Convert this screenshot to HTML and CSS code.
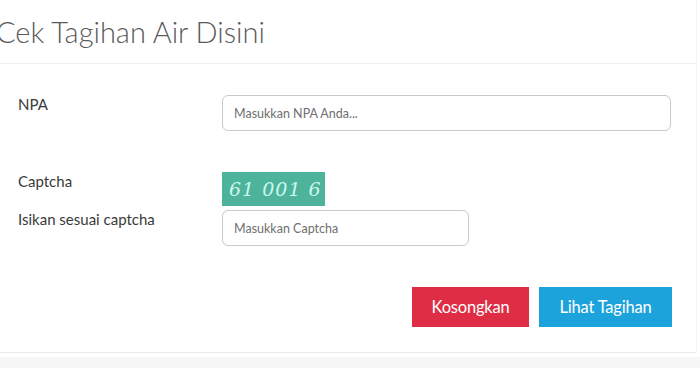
FILE: index.html
```html
<!DOCTYPE html>
<html lang="id">

<head>
    <meta charset="UTF-8">
    <meta name="viewport" content="width=device-width, initial-scale=1.0">
    <title>Cek Tagihan Air</title>
    <link rel="stylesheet" href="styles.css">
</head>

<body>
    <div class="card">
        <div class="card-header">
            <h2 class="card-title">Cek Tagihan Air Disini</h2>
        </div>

        <form class="bill-form">
            <!-- NPA -->
            <div class="form-row row-npa">
                <label class="form-label" for="npa">NPA</label>
                <input class="form-input input-wide" id="npa" type="text" placeholder="Masukkan NPA Anda...">
            </div>

            <!-- Captcha -->
            <div class="form-row row-captcha">
                <span class="form-label">Captcha</span>
                <div class="captcha-box">61 001 6</div>
            </div>
            <div class="form-row row-captcha-input">
                <label class="form-label" for="captcha">Isikan sesuai captcha</label>
                <input class="form-input input-short" id="captcha" type="text" placeholder="Masukkan Captcha">
            </div>

            <div class="form-actions">
                <button type="reset" class="btn btn-red">Kosongkan</button>
                <button type="submit" class="btn btn-blue">Lihat Tagihan</button>
            </div>
        </form>
    </div>
    <div class="page-bottom"></div>
</body>

</html>
```

FILE: styles.css
```css
body {
    margin: 0;
    font-family: Lato, "Open Sans", sans-serif;
    background-color: #fff;
    color: #333;
}

.card {
    width: 697px;
    background-color: #fff;
    border-right: 1px solid #f3f3f3;
    border-bottom: 1px solid #ececec;
    box-sizing: border-box;
}

.card-header {
    height: 64px;
    box-sizing: border-box;
    padding-top: 15px;
    border-bottom: 1px solid #eeeeee;
}

.card-title {
    margin: 0 0 0 -4px;
    font-size: 29px;
    font-weight: 300;
    line-height: 1.2;
    color: #5a5a5a;
}

.bill-form {
    padding: 31px 25px 25px 18px;
}

.form-row {
    display: flex;
    align-items: flex-start;
}

.form-label {
    width: 204px;
    flex-shrink: 0;
    font-size: 15px;
    line-height: 18px;
    color: #3a3a3a;
}

.row-captcha {
    margin-top: 41px;
}

.row-captcha-input {
    margin-top: 4px;
}

.form-input {
    height: 36px;
    box-sizing: border-box;
    padding: 0 11px;
    border: 1px solid #c9c9c9;
    border-radius: 6px;
    font-family: Lato, sans-serif;
    font-size: 12.5px;
    color: #555;
    background-color: #fff;
}

.form-input::placeholder {
    color: #6f6f6f;
}

.input-wide {
    width: 449px;
}

.input-short {
    width: 247px;
}

.captcha-box {
    width: 103px;
    height: 34px;
    background-color: #4db39b;
    color: #cdf7f1;
    font-family: "DejaVu Serif", serif;
    font-size: 19px;
    font-style: italic;
    line-height: 34px;
    letter-spacing: 1px;
    padding-left: 7px;
    box-sizing: border-box;
}

.form-actions {
    display: flex;
    justify-content: flex-end;
    gap: 10px;
    margin-top: 41px;
    margin-right: -1px;
}

.btn {
    height: 40px;
    padding: 0 16px;
    border: none;
    border-radius: 0;
    color: #fff;
    font-family: Lato, sans-serif;
    font-size: 16.5px;
    letter-spacing: -0.2px;
    cursor: pointer;
}

.btn-red {
    width: 117px;
    background-color: #de2d44;
}

.btn-blue {
    width: 133px;
    background-color: #1da3dc;
}

.page-bottom {
    margin-top: 4px;
    height: 20px;
    background-color: #f7f7f7;
}
```
